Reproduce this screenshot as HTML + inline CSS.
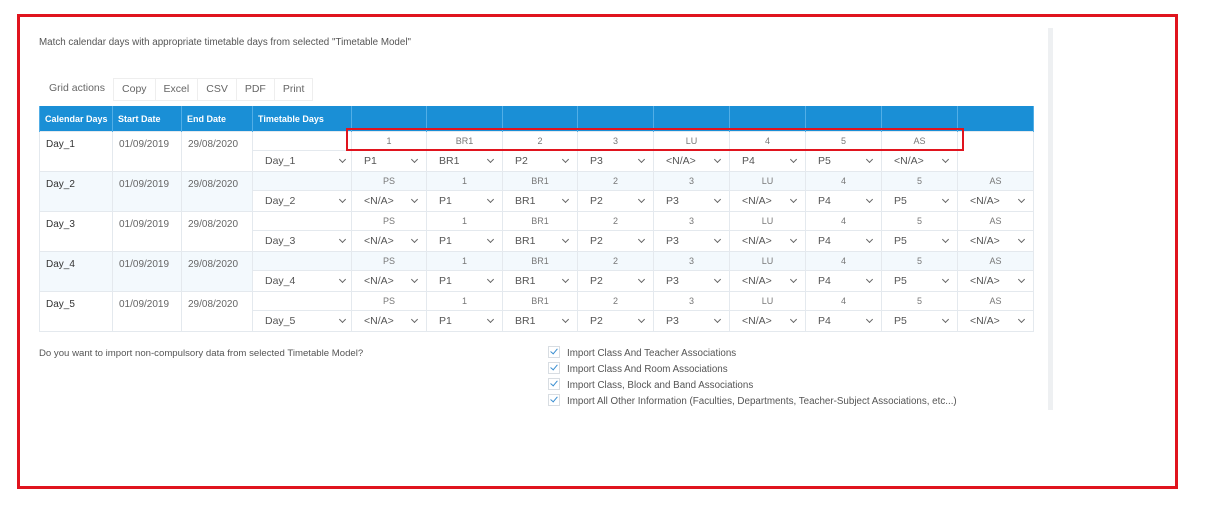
<!DOCTYPE html>
<html><head><meta charset="utf-8"><style>
body{margin:0;width:1221px;height:526px;background:#fff;font-family:"Liberation Sans",sans-serif;position:relative;overflow:hidden}
.frame{position:absolute;left:17px;top:14px;width:1155px;height:469px;border:3px solid #e0141e}
.strip{position:absolute;left:1048px;top:28px;width:5px;height:382px;background:#eef0f2}
.title{position:absolute;left:39px;top:37px;font-size:9.8px;color:#555;white-space:nowrap}
.ga{position:absolute;left:40px;top:78px;height:23px;display:flex;font-size:10.5px;color:#666;white-space:nowrap}
.ga div{border:1px solid #eee;border-right:none;line-height:21px;padding:0 8px}
.ga div:first-child{border:none;padding:0 8px 0 9px}
.ga div:last-child{border-right:1px solid #eee}
table{position:absolute;left:39px;top:106px;border-collapse:collapse;table-layout:fixed;width:995px;font-size:10.5px;color:#555}
th{background:#1a8fd6;color:#fff;font-size:9px;text-align:left;padding:0 5px;height:25px;border-left:1px solid #52aee6;border-right:1px solid #52aee6;white-space:nowrap;overflow:hidden}
td{border:1px solid #e4e9ee;padding:0;height:18px;white-space:nowrap}
td.d{vertical-align:top;padding:7px 6px 0;color:#333;font-size:10px}
td.dt{vertical-align:top;padding:7px 6px 0;color:#666;font-size:10px}
td.l{text-align:center;font-size:9px;color:#777;height:18px}
td.s{height:20px;padding:0 8px 0 12px;position:relative;font-size:10.5px;color:#555}
td.s:after{content:"";position:absolute;right:9px;top:6px;width:4px;height:4px;border-right:1.3px solid #666;border-bottom:1.3px solid #666;transform:rotate(45deg)}
td.s.tt{padding-left:12px}
td.s.tt:after{right:6px}
tr.b td{background:#f3f9fd}
tr.b td.s{background:#fff}
tr.b td.tt{background:#fff}
.hl{position:absolute;left:346px;top:128px;width:614px;height:19px;border:2.5px solid #e0141e}
.q{position:absolute;left:39px;top:348px;font-size:9.6px;color:#555}
.cb{position:absolute;left:548px;font-size:9.8px;color:#555;white-space:nowrap}
.cb span{display:inline-block;width:10px;height:10px;border:1px solid #d8dde2;margin-right:7px;vertical-align:-2px;position:relative}
.cb span:after{content:"";position:absolute;left:3px;top:0px;width:3px;height:6px;border-right:1.5px solid #3a8ed0;border-bottom:1.5px solid #3a8ed0;transform:rotate(40deg)}
</style></head><body>
<div class="frame"></div>
<div class="strip"></div>
<div class="title">Match calendar days with appropriate timetable days from selected "Timetable Model"</div>
<div class="ga"><div>Grid actions</div><div>Copy</div><div>Excel</div><div>CSV</div><div>PDF</div><div>Print</div></div>
<table>
<colgroup><col style="width:73px"><col style="width:69px"><col style="width:71px"><col style="width:99px"><col style="width:75px"><col style="width:76px"><col style="width:75px"><col style="width:76px"><col style="width:76px"><col style="width:76px"><col style="width:76px"><col style="width:76px"><col style="width:76px"></colgroup>
<tr><th>Calendar Days</th><th>Start Date</th><th>End Date</th><th>Timetable Days</th><th></th><th></th><th></th><th></th><th></th><th></th><th></th><th></th><th></th></tr>
<tr><td class="d" rowspan="2">Day_1</td><td class="dt" rowspan="2">01/09/2019</td><td class="dt" rowspan="2">29/08/2020</td><td class="l"></td><td class="l">1</td><td class="l">BR1</td><td class="l">2</td><td class="l">3</td><td class="l">LU</td><td class="l">4</td><td class="l">5</td><td class="l">AS</td><td class="l" rowspan="2"></td></tr>
<tr><td class="s tt">Day_1</td><td class="s">P1</td><td class="s">BR1</td><td class="s">P2</td><td class="s">P3</td><td class="s">&lt;N/A&gt;</td><td class="s">P4</td><td class="s">P5</td><td class="s">&lt;N/A&gt;</td></tr>
<tr class="b"><td class="d" rowspan="2">Day_2</td><td class="dt" rowspan="2">01/09/2019</td><td class="dt" rowspan="2">29/08/2020</td><td class="l"></td><td class="l">PS</td><td class="l">1</td><td class="l">BR1</td><td class="l">2</td><td class="l">3</td><td class="l">LU</td><td class="l">4</td><td class="l">5</td><td class="l">AS</td></tr>
<tr class="b"><td class="s tt">Day_2</td><td class="s">&lt;N/A&gt;</td><td class="s">P1</td><td class="s">BR1</td><td class="s">P2</td><td class="s">P3</td><td class="s">&lt;N/A&gt;</td><td class="s">P4</td><td class="s">P5</td><td class="s">&lt;N/A&gt;</td></tr>
<tr><td class="d" rowspan="2">Day_3</td><td class="dt" rowspan="2">01/09/2019</td><td class="dt" rowspan="2">29/08/2020</td><td class="l"></td><td class="l">PS</td><td class="l">1</td><td class="l">BR1</td><td class="l">2</td><td class="l">3</td><td class="l">LU</td><td class="l">4</td><td class="l">5</td><td class="l">AS</td></tr>
<tr><td class="s tt">Day_3</td><td class="s">&lt;N/A&gt;</td><td class="s">P1</td><td class="s">BR1</td><td class="s">P2</td><td class="s">P3</td><td class="s">&lt;N/A&gt;</td><td class="s">P4</td><td class="s">P5</td><td class="s">&lt;N/A&gt;</td></tr>
<tr class="b"><td class="d" rowspan="2">Day_4</td><td class="dt" rowspan="2">01/09/2019</td><td class="dt" rowspan="2">29/08/2020</td><td class="l"></td><td class="l">PS</td><td class="l">1</td><td class="l">BR1</td><td class="l">2</td><td class="l">3</td><td class="l">LU</td><td class="l">4</td><td class="l">5</td><td class="l">AS</td></tr>
<tr class="b"><td class="s tt">Day_4</td><td class="s">&lt;N/A&gt;</td><td class="s">P1</td><td class="s">BR1</td><td class="s">P2</td><td class="s">P3</td><td class="s">&lt;N/A&gt;</td><td class="s">P4</td><td class="s">P5</td><td class="s">&lt;N/A&gt;</td></tr>
<tr><td class="d" rowspan="2">Day_5</td><td class="dt" rowspan="2">01/09/2019</td><td class="dt" rowspan="2">29/08/2020</td><td class="l"></td><td class="l">PS</td><td class="l">1</td><td class="l">BR1</td><td class="l">2</td><td class="l">3</td><td class="l">LU</td><td class="l">4</td><td class="l">5</td><td class="l">AS</td></tr>
<tr><td class="s tt">Day_5</td><td class="s">&lt;N/A&gt;</td><td class="s">P1</td><td class="s">BR1</td><td class="s">P2</td><td class="s">P3</td><td class="s">&lt;N/A&gt;</td><td class="s">P4</td><td class="s">P5</td><td class="s">&lt;N/A&gt;</td></tr>
</table>
<div class="hl"></div>
<div class="q">Do you want to import non-compulsory data from selected Timetable Model?</div>
<div class="cb" style="top:346px"><span></span>Import Class And Teacher Associations</div>
<div class="cb" style="top:362px"><span></span>Import Class And Room Associations</div>
<div class="cb" style="top:378px"><span></span>Import Class, Block and Band Associations</div>
<div class="cb" style="top:394px"><span></span>Import All Other Information (Faculties, Departments, Teacher-Subject Associations, etc...)</div>
</body></html>
